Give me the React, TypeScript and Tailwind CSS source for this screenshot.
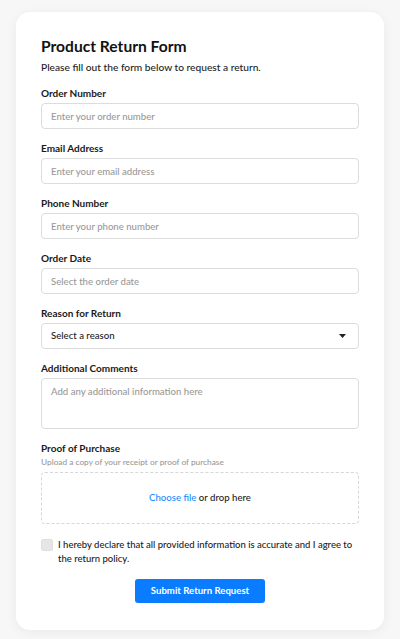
import { useState } from "react";

const font = { fontFamily: 'Lato, "Noto Sans", sans-serif' };

function Field({ label, children }: { label: string; children: React.ReactNode }) {
    return (
        <div className="flex flex-col mb-[12px]">
            <label className="text-[10px] leading-[15px] font-bold text-[#1a1a1a] mb-[2px]">{label}</label>
            {children}
        </div>
    );
}

const inputCls =
    "h-[26px] w-full rounded-[4px] border border-[#dcdcdc] bg-white px-[9px] text-[9.6px] font-medium text-[#333] placeholder:text-[#999] outline-none";

export default function App() {
    const [agreed, setAgreed] = useState(false);

    return (
        <div className="min-h-[639px] bg-[#f7f7f7] pt-[12px] px-[16px]" style={font}>
            <div className="bg-white rounded-[14px] shadow-[0_2px_12px_rgba(0,0,0,0.06)] px-[25px] pt-[23px] pb-[27px]">
                <h1 className="text-[15.6px] leading-[22px] font-bold text-[#111]">Product Return Form</h1>
                <p className="text-[10.2px] leading-[16px] font-medium text-[#222] mt-[2px] mb-[11px]">
                    Please fill out the form below to request a return.
                </p>

                <Field label="Order Number">
                    <input className={inputCls} placeholder="Enter your order number" />
                </Field>
                <Field label="Email Address">
                    <input className={inputCls} placeholder="Enter your email address" />
                </Field>
                <Field label="Phone Number">
                    <input className={inputCls} placeholder="Enter your phone number" />
                </Field>
                <Field label="Order Date">
                    <input className={inputCls} placeholder="Select the order date" />
                </Field>
                <Field label="Reason for Return">
                    <div className={inputCls + " flex items-center justify-between"}>
                        <span className="text-[#222]">Select a reason</span>
                        <svg width="7" height="4" viewBox="0 0 7 4" className="mr-[3px]">
                            <path d="M0 0 L7 0 L3.5 4 Z" fill="#222" />
                        </svg>
                    </div>
                </Field>
                <Field label="Additional Comments">
                    <textarea
                        className="h-[51px] w-full resize-none rounded-[4px] border border-[#dcdcdc] bg-white px-[9px] py-[6px] text-[9.6px] font-medium text-[#333] placeholder:text-[#999] outline-none"
                        placeholder="Add any additional information here"
                    />
                </Field>

                <div className="flex flex-col">
                    <span className="text-[10px] leading-[15px] font-bold text-[#1a1a1a]">Proof of Purchase</span>
                    <span className="text-[8.3px] leading-[12px] font-medium text-[#999] mb-[4px]">
                        Upload a copy of your receipt or proof of purchase
                    </span>
                    <div className="h-[52px] rounded-[4px] border border-dashed border-[#d6d6d6] flex items-center justify-center text-[9.6px] font-medium text-[#222]">
                        <span className="text-[#1a8cff]">Choose file</span>
                        <span>&nbsp;or drop here</span>
                    </div>
                </div>

                <div className="flex items-start gap-[5px] mt-[14px]">
                    <button
                        onClick={() => setAgreed(!agreed)}
                        className={
                            "mt-[1px] h-[12px] w-[12px] shrink-0 rounded-[2px] border border-[#e0e0e0] " +
                            (agreed ? "bg-[#0a7cff]" : "bg-[#e6e6e6]")
                        }
                    />
                    <p className="text-[9.5px] leading-[14px] font-medium text-[#222]">
                        I hereby declare that all provided information is accurate and I agree to the return policy.
                    </p>
                </div>

                <div className="flex justify-center mt-[13px]">
                    <button className="h-[24px] w-[130px] rounded-[3px] bg-[#0a7cff] text-white text-[9.6px] font-bold">
                        Submit Return Request
                    </button>
                </div>
            </div>
        </div>
    );
}
